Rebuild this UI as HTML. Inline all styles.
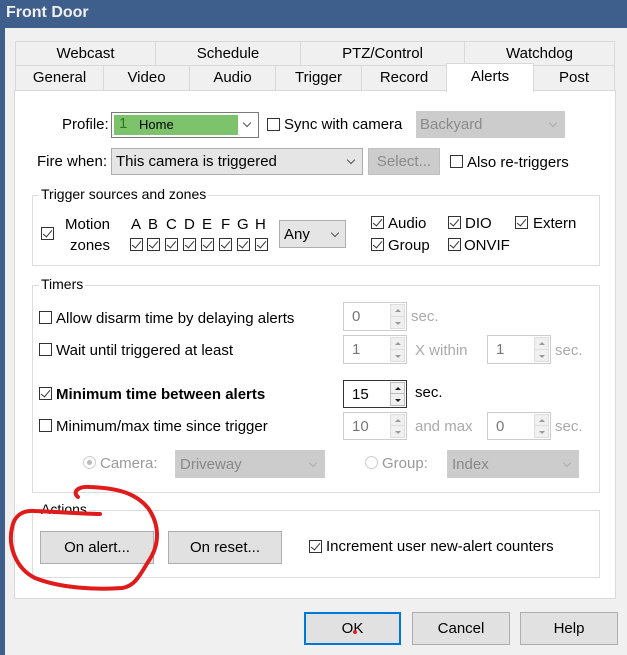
<!DOCTYPE html>
<html><head><meta charset="utf-8"><style>
*{box-sizing:border-box;margin:0;padding:0}
body{width:627px;height:655px;background:#f0f0f0;font-family:"Liberation Sans",sans-serif;font-size:14px;color:#000;position:relative;overflow:hidden}
.a{position:absolute;white-space:nowrap}
.tab{position:absolute;background:#f0f0f0;border:1px solid #d9d9d9;text-align:center;font-size:15px;line-height:24px}
.cb{position:absolute;width:13px;height:13px;border:1px solid #333;background:#fff}
.cb.c::after{content:"";position:absolute;left:3px;top:0px;width:4px;height:8px;border:solid #333;border-width:0 1.5px 1.5px 0;transform:rotate(40deg)}
.grp{position:absolute;border:1px solid #dcdcdc}
.gl{position:absolute;background:#fff;padding:0 2px;top:-10px;left:6px;font-size:14px}
.spin{position:absolute;width:64px;height:29px;border:1px solid #ccc;background:#fff}
.spin span{position:absolute;left:8px;top:5px;font-size:15px;color:#777}
.spin i{position:absolute;right:1px;width:15px;height:13px;background:#f0f0f0;border:1px solid #ddd}
.spin i.u{top:1px}.spin i.d{bottom:1px}
.spin i::after{content:"";position:absolute;left:4px;border-left:3px solid transparent;border-right:3px solid transparent}
.spin i.u::after{top:4px;border-bottom:3px solid #999}
.spin i.d::after{top:5px;border-top:3px solid #999}
.spin.k i::after{border-bottom-color:#222;border-top-color:#222}
.btn{position:absolute;background:#e1e1e1;border:1px solid #adadad;text-align:center;font-size:15px}
.combo{position:absolute;border:1px solid #ccc;font-size:15px}
.dis{color:#8a8a8a}
.chev{position:absolute;width:6px;height:6px;border:solid #555;border-width:0 1px 1px 0;transform:rotate(45deg)}
</style></head><body>
<div class="a" style="left:0;top:0;width:627px;height:28px;background:#3e5f8b"></div>
<div class="a" style="left:6px;top:4px;color:#f0f0f0;font-size:16px;font-weight:bold">Front Door</div>
<div class="a" style="left:0;top:28px;width:5px;height:627px;background:#3e5f8b"></div>

<div class="tab" style="left:15px;top:41px;width:141px;height:25px">Webcast</div>
<div class="tab" style="left:155px;top:41px;width:146px;height:25px">Schedule</div>
<div class="tab" style="left:300px;top:41px;width:165px;height:25px">PTZ/Control</div>
<div class="tab" style="left:464px;top:41px;width:151px;height:25px">Watchdog</div>
<div class="tab" style="left:15px;top:65px;width:89px;height:26px">General</div>
<div class="tab" style="left:103px;top:65px;width:87px;height:26px">Video</div>
<div class="tab" style="left:189px;top:65px;width:87px;height:26px">Audio</div>
<div class="tab" style="left:275px;top:65px;width:87px;height:26px">Trigger</div>
<div class="tab" style="left:361px;top:65px;width:86px;height:26px">Record</div>
<div class="tab" style="left:533px;top:65px;width:82px;height:26px">Post</div>
<div class="a" style="left:14px;top:90px;width:602px;height:509px;background:#fff;border:1px solid #d9d9d9"></div>
<div class="tab" style="left:446px;top:63px;width:88px;height:29px;background:#fff;border-bottom:none;line-height:26px">Alerts</div>

<div class="a" style="left:62px;top:116px;font-size:15px">Profile:</div>
<div class="combo" style="left:111px;top:112px;width:148px;height:26px;border-color:#7a7a7a;background:#fff">
 <div class="a" style="left:2px;top:2px;width:124px;height:20px;background:#7cc36c"></div>
 <div class="a" style="left:7px;top:2px;color:#2a7a20;font-size:15px">1</div>
 <div class="a" style="left:27px;top:4px;font-size:13px">Home</div>
 <div class="chev" style="left:132px;top:7px"></div>
</div>
<div class="cb" style="left:267px;top:118px"></div>
<div class="a" style="left:284px;top:116px;font-size:15px">Sync with camera</div>
<div class="combo dis" style="left:416px;top:111px;width:149px;height:27px;background:#cccccc"><span class="a" style="left:3px;top:4px">Backyard</span><div class="chev" style="left:133px;top:8px;border-color:#aaa"></div></div>

<div class="a" style="left:37px;top:153px;font-size:15px">Fire when:</div>
<div class="combo" style="left:111px;top:148px;width:252px;height:27px;background:#e5e5e5;border-color:#adadad"><span class="a" style="left:4px;top:4px">This camera is triggered</span><div class="chev" style="left:236px;top:8px"></div></div>
<div class="btn dis" style="left:368px;top:148px;width:72px;height:27px;background:#ccc;border-color:#bfbfbf;line-height:25px">Select...</div>
<div class="cb" style="left:450px;top:155px"></div>
<div class="a" style="left:467px;top:154px;font-size:15px">Also re-triggers</div>

<div class="grp" style="left:32px;top:195px;width:568px;height:71px"><div class="gl">Trigger sources and zones</div></div>
<div class="cb c" style="left:41px;top:227px"></div>
<div class="a" style="left:65px;top:216px;font-size:15px">Motion</div>
<div class="a" style="left:70px;top:237px;font-size:15px">zones</div>
<div class="a" style="left:131px;top:216px;font-size:15px">A</div>
<div class="a" style="left:148px;top:216px;font-size:15px">B</div>
<div class="a" style="left:166px;top:216px;font-size:15px">C</div>
<div class="a" style="left:184px;top:216px;font-size:15px">D</div>
<div class="a" style="left:202px;top:216px;font-size:15px">E</div>
<div class="a" style="left:221px;top:216px;font-size:15px">F</div>
<div class="a" style="left:237px;top:216px;font-size:15px">G</div>
<div class="a" style="left:255px;top:216px;font-size:15px">H</div>
<div class="cb c" style="left:130px;top:238px"></div><div class="cb c" style="left:147px;top:238px"></div><div class="cb c" style="left:165px;top:238px"></div><div class="cb c" style="left:183px;top:238px"></div><div class="cb c" style="left:201px;top:238px"></div><div class="cb c" style="left:219px;top:238px"></div><div class="cb c" style="left:237px;top:238px"></div><div class="cb c" style="left:255px;top:238px"></div>
<div class="combo" style="left:279px;top:220px;width:67px;height:28px;background:#e5e5e5;border-color:#adadad"><span class="a" style="left:4px;top:5px">Any</span><div class="chev" style="left:52px;top:9px"></div></div>
<div class="cb c" style="left:371px;top:216px"></div><div class="a" style="left:388px;top:215px;font-size:15px">Audio</div>
<div class="cb c" style="left:371px;top:238px"></div><div class="a" style="left:388px;top:237px;font-size:15px">Group</div>
<div class="cb c" style="left:448px;top:216px"></div><div class="a" style="left:465px;top:215px;font-size:15px">DIO</div>
<div class="cb c" style="left:448px;top:238px"></div><div class="a" style="left:464px;top:237px;font-size:15px">ONVIF</div>
<div class="cb c" style="left:515px;top:216px"></div><div class="a" style="left:533px;top:215px;font-size:15px">Extern</div>

<div class="grp" style="left:32px;top:285px;width:568px;height:208px"><div class="gl">Timers</div></div>
<div class="cb" style="left:39px;top:311px"></div><div class="a" style="left:56px;top:310px;font-size:15px">Allow disarm time by delaying alerts</div>
<div class="spin" style="left:343px;top:302px"><span>0</span><i class="u"></i><i class="d"></i></div>
<div class="a dis" style="left:411px;top:308px;font-size:15px;color:#aaa">sec.</div>
<div class="cb" style="left:39px;top:343px"></div><div class="a" style="left:56px;top:342px;font-size:15px">Wait until triggered at least</div>
<div class="spin" style="left:343px;top:335px"><span>1</span><i class="u"></i><i class="d"></i></div>
<div class="a" style="left:415px;top:342px;font-size:15px;color:#aaa">X within</div>
<div class="spin" style="left:487px;top:335px"><span>1</span><i class="u"></i><i class="d"></i></div>
<div class="a" style="left:555px;top:342px;font-size:15px;color:#aaa">sec.</div>
<div class="cb c" style="left:39px;top:387px"></div><div class="a" style="left:56px;top:386px;font-size:15px;font-weight:bold">Minimum time between alerts</div>
<div class="spin k" style="left:343px;top:380px;height:28px;border-color:#333"><span style="color:#000">15</span><i class="u" style="border-color:#bbb"></i><i class="d" style="border-color:#bbb"></i></div>
<div class="a" style="left:415px;top:384px;font-size:15px">sec.</div>
<div class="cb" style="left:39px;top:419px"></div><div class="a" style="left:56px;top:418px;font-size:15px">Minimum/max time since trigger</div>
<div class="spin" style="left:343px;top:412px;height:28px"><span>10</span><i class="u"></i><i class="d"></i></div>
<div class="a" style="left:415px;top:418px;font-size:15px;color:#aaa">and max</div>
<div class="spin" style="left:487px;top:412px;height:28px"><span>0</span><i class="u"></i><i class="d"></i></div>
<div class="a" style="left:555px;top:418px;font-size:15px;color:#aaa">sec.</div>
<div class="a" style="left:83px;top:456px;width:13px;height:13px;border:1px solid #ccc;border-radius:50%;background:#fff"><div class="a" style="left:3px;top:3px;width:5px;height:5px;border-radius:50%;background:#bbb"></div></div>
<div class="a" style="left:100px;top:455px;font-size:15px;color:#999">Camera:</div>
<div class="combo" style="left:175px;top:450px;width:150px;height:28px;background:#ccc;color:#888"><span class="a" style="left:4px;top:5px">Driveway</span><div class="chev" style="left:134px;top:9px;border-color:#aaa"></div></div>
<div class="a" style="left:365px;top:456px;width:13px;height:13px;border:1px solid #ccc;border-radius:50%;background:#fff"></div>
<div class="a" style="left:382px;top:455px;font-size:15px;color:#999">Group:</div>
<div class="combo" style="left:447px;top:450px;width:132px;height:28px;background:#ccc;color:#888"><span class="a" style="left:4px;top:5px">Index</span><div class="chev" style="left:116px;top:9px;border-color:#aaa"></div></div>

<div class="grp" style="left:32px;top:510px;width:568px;height:68px"><div class="gl">Actions</div></div>
<div class="btn" style="left:40px;top:531px;width:114px;height:33px;line-height:31px">On alert...</div>
<div class="btn" style="left:168px;top:531px;width:114px;height:33px;line-height:31px">On reset...</div>
<div class="cb c" style="left:309px;top:540px"></div>
<div class="a" style="left:326px;top:538px;font-size:15px">Increment user new-alert counters</div>

<div class="btn" style="left:304px;top:612px;width:97px;height:33px;line-height:29px;border:2px solid #0078d7">OK</div>
<div class="a" style="left:353px;top:630px;width:4px;height:4px;border-radius:50%;background:#e02020"></div>
<div class="btn" style="left:412px;top:612px;width:98px;height:33px;line-height:31px">Cancel</div>
<div class="btn" style="left:520px;top:612px;width:98px;height:33px;line-height:31px">Help</div>

<svg class="a" style="left:0;top:0" width="627" height="655"><path d="M78,497 C72,492 78,486 90,487 C115,488 135,492 148,508 C160,525 160,545 148,562 C140,575 135,586 122,588 C95,590 60,588 35,578 C15,568 8,545 12,528 C14,516 22,510 35,511 C60,512 85,514 100,514" fill="none" stroke="#e01b1b" stroke-width="4" stroke-linecap="round"/></svg>
</body></html>
